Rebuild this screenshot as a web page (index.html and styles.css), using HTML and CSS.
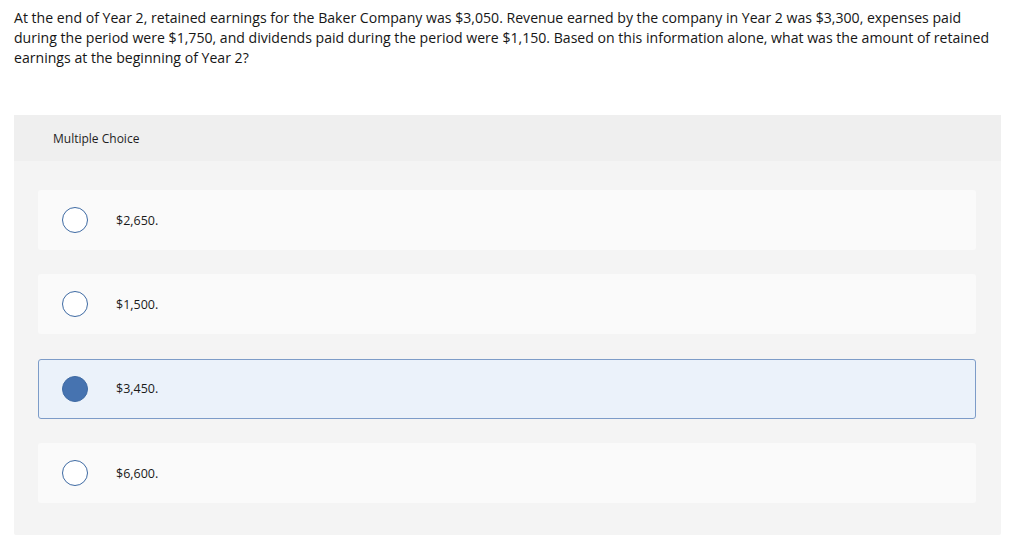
FILE: index.html
```html
<!DOCTYPE html>
<html lang="en">
<head>
    <meta charset="UTF-8">
    <title>Question</title>
    <link rel="stylesheet" href="styles.css">
</head>
<body>
    <div class="pergunta">
        At the end of Year 2, retained earnings for the Baker Company was $3,050. Revenue earned by the company in Year 2 was $3,300, expenses paid during the period were $1,750, and dividends paid during the period were $1,150. Based on this information alone, what was the amount of retained earnings at the beginning of Year 2?
    </div>

    <div class="painel">
        <div class="painel-header">Multiple Choice</div>
        <div class="opcoes">
            <label class="opcao">
                <span class="radio"></span>
                <span class="opcao-texto">$2,650.</span>
            </label>
            <label class="opcao">
                <span class="radio"></span>
                <span class="opcao-texto">$1,500.</span>
            </label>
            <label class="opcao selecionada">
                <span class="radio"></span>
                <span class="opcao-texto">$3,450.</span>
            </label>
            <label class="opcao">
                <span class="radio"></span>
                <span class="opcao-texto">$6,600.</span>
            </label>
        </div>
    </div>
</body>
</html>
```

FILE: styles.css
```css
body {
    margin: 0;
    background: #fff;
    color: #1a1a1a;
    font-family: 'Open Sans', Arial, sans-serif;
}
.pergunta {
    width: 980px;
    margin: 8px 14px 0 14px;
    font-size: 14.1px;
    line-height: 20px;
    color: #161616;
}
.painel {
    width: 987px;
    margin: 47px 14px 0 14px;
    background: #f4f4f4;
    border-radius: 2px;
}
.painel-header {
    background: #efefef;
    height: 46px;
    display: flex;
    align-items: center;
    padding-left: 39px;
    font-size: 12px;
    color: #1e1e1e;
}
.opcoes {
    display: flex;
    flex-direction: column;
    gap: 24.4px;
    padding: 29px 25px 32px 24px;
}
.opcao {
    height: 60px;
    background: #fafafa;
    border: 1px solid transparent;
    border-radius: 3px;
    box-sizing: border-box;
    display: flex;
    align-items: center;
    padding-left: 23px;
    cursor: pointer;
}
.opcao.selecionada {
    background: #ebf2fa;
    border-color: #7d9cc8;
}
.radio {
    width: 24px;
    height: 24px;
    border-radius: 50%;
    border: 1px solid #3e6aa3;
    background: #fff;
    flex-shrink: 0;
}
.selecionada .radio {
    background: #4673b0;
    border-color: #3e6aa3;
}
.opcao-texto {
    margin-left: 28px;
    font-size: 12.5px;
    color: #1a1a1a;
}
```
